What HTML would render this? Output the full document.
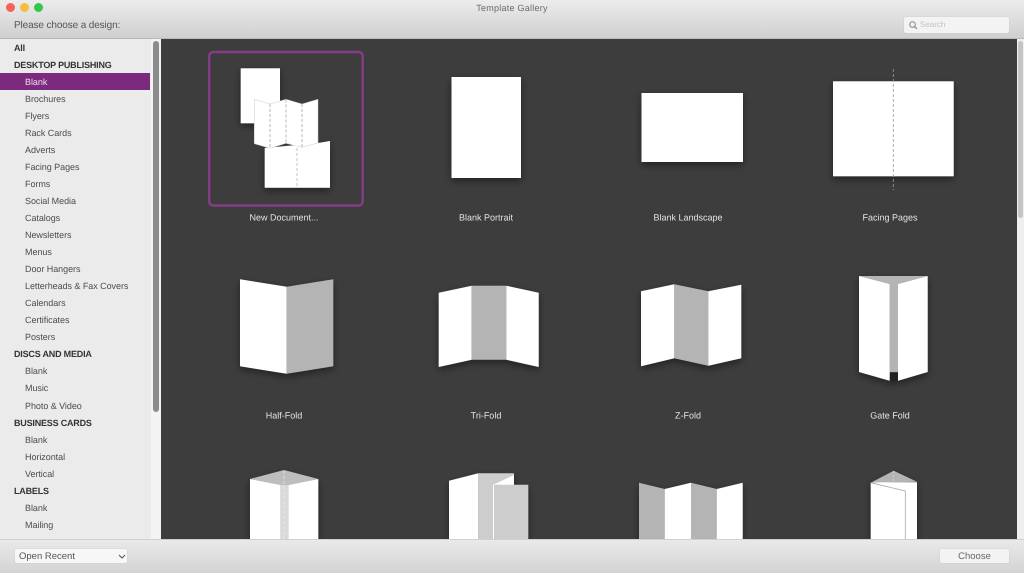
<!DOCTYPE html>
<html>
<head>
<meta charset="utf-8">
<style>
html,body{margin:0;padding:0;width:1024px;height:573px;overflow:hidden;background:#e6e6e6;font-family:"Liberation Sans",sans-serif;text-rendering:geometricPrecision}
#wrap{position:absolute;left:0;top:0;width:1024px;height:573px;overflow:hidden;filter:blur(.3px)}
.abs{position:absolute}
#title{left:0;top:0;width:1024px;height:39px;background:linear-gradient(#ececec,#cfcfcf);border-bottom:1px solid #b9b9b9;box-sizing:border-box}
.dot{position:absolute;width:9px;height:9px;border-radius:50%;top:3px}
#tt{left:0;width:1024px;top:3px;text-align:center;font-size:9px;letter-spacing:.25px;color:#6a6a6a}
#pc{left:14px;top:19.5px;font-size:10px;letter-spacing:-.12px;color:#555}
#search{left:904px;top:17px;width:105px;height:16px;background:#f3f3f3;border-radius:2px;box-shadow:0 0 1px #bbb}
#search span{position:absolute;left:16px;top:3px;font-size:8px;color:#c2c2c2}
#side{left:0;top:39px;width:151px;height:500px;background:#ebebeb;overflow:hidden}
#track{left:151px;top:39px;width:10px;height:500px;background:#f3f3f3}
#side div{position:absolute;left:25px;font-size:9px;letter-spacing:-.05px;color:#4c4c4c;line-height:11px;white-space:nowrap;margin-top:1px}
#side div.h{left:14px;font-weight:bold;color:#333;letter-spacing:-.2px}
#selbar{left:0;top:73px;width:150px;height:17px;background:#7b2a7d}
#main{left:161px;top:39px;width:856px;height:500px;background:#3d3d3d}
#sb1{left:153px;top:41px;width:6px;height:371px;border-radius:3px;background:#8c8c8c}
#rt{left:1017px;top:39px;width:7px;height:500px;background:#efefef}
#sb2{left:1018px;top:41px;width:5px;height:177px;border-radius:3px;background:#c4c4c4}
#bottom{left:0;top:539px;width:1024px;height:34px;background:linear-gradient(#e9e9e9,#d3d3d3);border-top:1px solid #cfcfcf;box-sizing:border-box}
#open{left:15px;top:549px;width:112px;height:14px;background:#f7f7f7;border-radius:2px;box-shadow:0 0 1px #bbb;font-size:9.5px;color:#555;line-height:15px;text-indent:4px}
#choose{left:940px;top:549px;width:69px;height:14px;background:#f3f3f3;border-radius:2px;box-shadow:0 0 1px #bbb;font-size:9.5px;color:#666;line-height:15px;text-align:center}
svg{position:absolute;left:0;top:0}
svg text{font-family:"Liberation Sans",sans-serif;font-size:9px;fill:#e4e4e4;text-anchor:middle}
</style>
</head>
<body>
<div id="wrap">
<div class="abs" id="title">
  <span class="dot" style="left:5.5px;background:#f8605a"></span>
  <span class="dot" style="left:19.5px;background:#f5bd3a"></span>
  <span class="dot" style="left:34px;background:#35c748"></span>
</div>
<div class="abs" id="tt">Template Gallery</div>
<div class="abs" id="pc">Please choose a design:</div>
<div class="abs" id="search">
  <svg width="12" height="12" style="left:3px;top:2px"><circle cx="5.5" cy="5.5" r="2.8" fill="none" stroke="#888" stroke-width="1"/><path d="M7.6 7.6L10 10" stroke="#888" stroke-width="1.2"/></svg>
  <span>Search</span>
</div>
<div class="abs" id="side">
  <div class="h" style="top:3px">All</div>
  <div class="h" style="top:20px">DESKTOP PUBLISHING</div>
  <div style="top:54px">Brochures</div>
  <div style="top:71px">Flyers</div>
  <div style="top:88px">Rack Cards</div>
  <div style="top:105px">Adverts</div>
  <div style="top:122px">Facing Pages</div>
  <div style="top:139px">Forms</div>
  <div style="top:156px">Social Media</div>
  <div style="top:173px">Catalogs</div>
  <div style="top:190px">Newsletters</div>
  <div style="top:207px">Menus</div>
  <div style="top:224px">Door Hangers</div>
  <div style="top:241px">Letterheads &amp; Fax Covers</div>
  <div style="top:258px">Calendars</div>
  <div style="top:275px">Certificates</div>
  <div style="top:292px">Posters</div>
  <div class="h" style="top:309px">DISCS AND MEDIA</div>
  <div style="top:326px">Blank</div>
  <div style="top:343px">Music</div>
  <div style="top:361px">Photo &amp; Video</div>
  <div class="h" style="top:378px">BUSINESS CARDS</div>
  <div style="top:395px">Blank</div>
  <div style="top:412px">Horizontal</div>
  <div style="top:429px">Vertical</div>
  <div class="h" style="top:446px">LABELS</div>
  <div style="top:463px">Blank</div>
  <div style="top:480px">Mailing</div>
</div>
<div class="abs" id="track"></div>
<div class="abs" id="selbar"></div>
<div class="abs" style="left:25px;top:77px;font-size:9px;letter-spacing:-.05px;line-height:11px;color:#f0dff0">Blank</div>
<div class="abs" id="sb1"></div>
<div class="abs" id="main"></div>
<svg width="1024" height="539" viewBox="0 0 1024 539">
  <defs>
    <filter id="s" x="-30%" y="-30%" width="160%" height="160%"><feDropShadow dx="0" dy="3" stdDeviation="4" flood-color="#000" flood-opacity=".45"/></filter>
    <clipPath id="c"><rect x="161" y="39" width="856" height="500"/></clipPath>
  </defs>
  <rect x="209.2" y="52" width="153.5" height="153.5" rx="4" fill="none" stroke="#853d87" stroke-width="2.4"/>
  <g filter="url(#s)">
    <rect x="240.7" y="68.3" width="39.3" height="55" fill="#fff"/>
  </g>
  <g filter="url(#s)">
    <path d="M264.7 148L318 143L330 141V187.7H264.7Z" fill="#fff"/>
  </g>
  <path d="M254.3 99.3L270 104L286 99.3L302 104L318 99.3V143L302 147.3L286 143.3L270 148.3L254.3 143.7Z" fill="#fff" stroke="#ccc" stroke-width=".5"/>
  <path d="M270 104V148M286 99.5V143M302 104V147" stroke="#999" stroke-width=".7" stroke-dasharray="3 2" fill="none"/>
  <path d="M297 148V187.5" stroke="#aaa" stroke-width=".7" stroke-dasharray="3 2"/>

  <rect x="451.5" y="77" width="69.5" height="101" fill="#fff" filter="url(#s)"/>
  <rect x="641.5" y="93" width="101.5" height="69" fill="#fff" filter="url(#s)"/>
  <rect x="833" y="81.3" width="120.7" height="95" fill="#fff" filter="url(#s)"/>
  <path d="M893.3 69V190" stroke="#999" stroke-width=".8" stroke-dasharray="3 2"/>

  <g filter="url(#s)">
    <path d="M240 279.3L286.7 286.7V373.7L240 366.3Z" fill="#fff"/>
    <path d="M286.7 286.7L333.3 279.3V366.3L286.7 373.7Z" fill="#b4b4b4"/>
  </g>
  <g filter="url(#s)">
    <path d="M438.7 292.7L471.7 285.7V359.7L438.7 367Z" fill="#fff"/>
    <rect x="471.7" y="285.7" width="34.6" height="74" fill="#b4b4b4"/>
    <path d="M506.3 285.7L538.7 292.7V367L506.3 359.7Z" fill="#fff"/>
  </g>
  <g filter="url(#s)">
    <path d="M641 291.3L674.3 284.3V358.3L641 366.3Z" fill="#fff"/>
    <path d="M674.3 284.3L708.3 291.3V365.7L674.3 358.3Z" fill="#b4b4b4"/>
    <path d="M708.3 291.3L741.3 284.7V358.3L708.3 365.7Z" fill="#fff"/>
  </g>
  <g filter="url(#s)">
    <path d="M859 276H927.7L898 284V372.3H889.7V284Z" fill="#b4b4b4"/>
    <rect x="889.7" y="372.3" width="8.3" height="8" fill="#222"/>
    <path d="M859 276L889.7 284V380.7L859 372Z" fill="#fff"/>
    <path d="M898 284L927.7 276V372L898 380.7Z" fill="#fff"/>
  </g>

  <g clip-path="url(#c)">
    <g filter="url(#s)">
      <path d="M250 479L284 470L318.3 479L288.3 485H280.7Z" fill="#bdbdbd"/>
      <path d="M250 479L280.7 485V545H250Z" fill="#fff"/>
      <rect x="280.7" y="485" width="7.6" height="60" fill="#d9d9d9"/>
      <path d="M288.3 485L318.3 479V545H288.3Z" fill="#fff"/>
    </g>
    <path d="M284 471V545" stroke="#eee" stroke-width=".7" stroke-dasharray="3 2"/>
    <g filter="url(#s)">
      <path d="M449 480.7L478.3 473.3V545H449Z" fill="#fff"/>
      <path d="M478.3 473.3H514V484.7H528.3V545H478.3Z" fill="#cdcdcd"/>
      <path d="M493.3 484.7L514 475V484.7Z" fill="#fff"/>
      <path d="M493.5 484.7V545" stroke="#fff" stroke-width="1"/>
    </g>
    <g filter="url(#s)">
      <path d="M639 482.7L664.7 489V545H639Z" fill="#b4b4b4"/>
      <path d="M664.7 489L691 482.7V545H664.7Z" fill="#fff"/>
      <path d="M691 482.7L716.7 489V545H691Z" fill="#b4b4b4"/>
      <path d="M716.7 489L742.7 482.7V545H716.7Z" fill="#fff"/>
    </g>
    <g filter="url(#s)">
      <path d="M870.7 482.7L893.7 470.7L917 481.7Z" fill="#b4b4b4"/>
      <path d="M882.7 482.3H917V545H870.7V482.7Z" fill="#fff"/>
    </g>
    <path d="M893.7 471V483" stroke="#ddd" stroke-width=".7" stroke-dasharray="2 2"/>
    <path d="M870.7 482.7L905.3 491V545" stroke="#a8a8a8" stroke-width=".8" fill="none"/>
  </g>

  <text x="284" y="220.5">New Document...</text>
  <text x="486" y="220.5">Blank Portrait</text>
  <text x="688" y="220.5">Blank Landscape</text>
  <text x="890" y="220.5">Facing Pages</text>
  <text x="284" y="418.5">Half-Fold</text>
  <text x="486" y="418.5">Tri-Fold</text>
  <text x="688" y="418.5">Z-Fold</text>
  <text x="890" y="418.5">Gate Fold</text>
</svg>
<div class="abs" id="rt"></div>
<div class="abs" id="sb2"></div>
<div class="abs" id="bottom"></div>
<div class="abs" id="open">Open Recent
  <svg width="8" height="6" style="left:103px;top:5px"><path d="M1 1L4 4L7 1" fill="none" stroke="#555" stroke-width="1.1"/></svg>
</div>
<div class="abs" id="choose">Choose</div>
</div>
</body>
</html>
